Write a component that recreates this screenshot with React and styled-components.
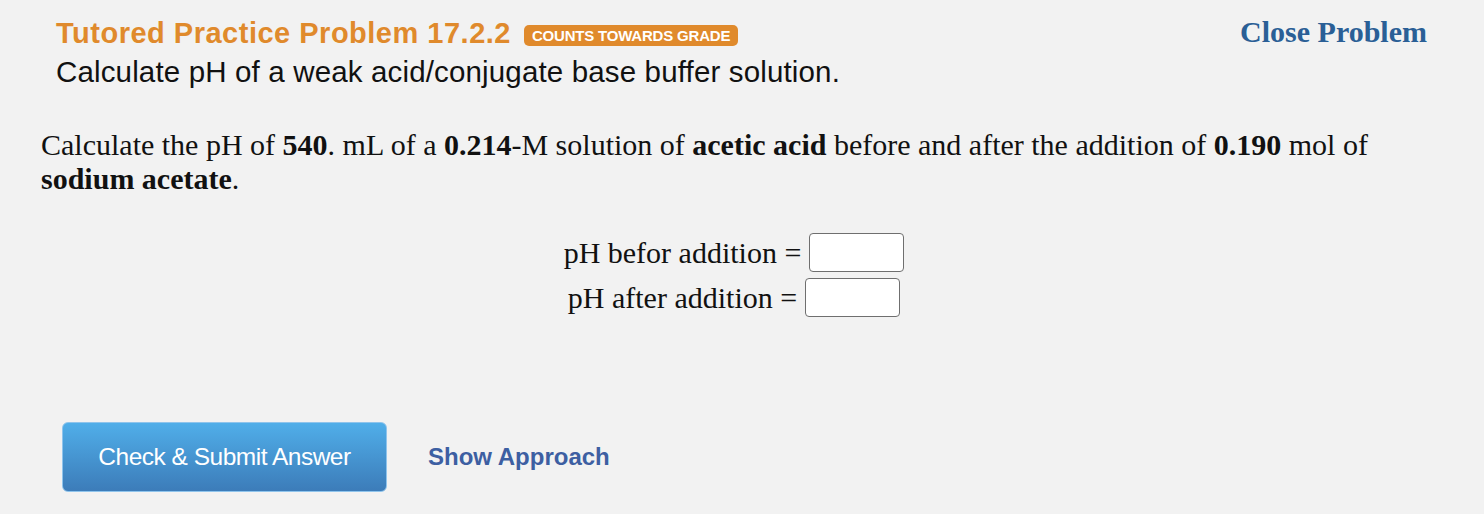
import React from "react";
import styled, { createGlobalStyle } from "styled-components";

const Global = createGlobalStyle`
  html, body { margin: 0; padding: 0; background: #f2f2f2; }
  body { width: 1484px; height: 514px; overflow: hidden; }
`;

const Page = styled.div`
  width: 1484px;
  height: 514px;
  box-sizing: border-box;
  background: #f2f2f2;
  padding: 14px 57px 0 41px;
  display: flex;
  flex-direction: column;
`;

const Header = styled.div`
  display: flex;
  justify-content: space-between;
  align-items: flex-start;
  padding-left: 15px;
`;

const TitleBlock = styled.div`
  display: flex;
  flex-direction: column;
`;

const TitleRow = styled.div`
  display: flex;
  align-items: center;
  gap: 13px;
`;

const Title = styled.h1`
  margin: 0;
  font-family: "Liberation Sans", Arial, sans-serif;
  font-weight: 700;
  font-size: 29px;
  letter-spacing: 0.5px;
  line-height: 38px;
  color: #e08a2c;
`;

const Badge = styled.span`
  background: #e08a2c;
  color: #fff;
  font-family: "Liberation Sans", Arial, sans-serif;
  font-weight: 700;
  font-size: 15px;
  letter-spacing: -0.2px;
  line-height: 21px;
  padding: 0 8px;
  border-radius: 5px;
  margin-top: 5px;
`;

const Subtitle = styled.div`
  font-family: "Liberation Sans", Arial, sans-serif;
  font-size: 29.5px;
  letter-spacing: 0.15px;
  line-height: 36px;
  margin-top: 2px;
  color: #111;
`;

const CloseLink = styled.a`
  font-family: "Liberation Serif", "Times New Roman", serif;
  font-weight: 700;
  font-size: 30px;
  line-height: 36px;
  color: #2a5f96;
  text-decoration: none;
  cursor: pointer;
`;

const Question = styled.p`
  margin: 38px 0 0 0;
  font-family: "Liberation Serif", "Times New Roman", serif;
  font-size: 30px;
  line-height: 34px;
  color: #111;
`;

const Answers = styled.div`
  margin-top: 37px;
  display: flex;
  flex-direction: column;
  align-items: center;
  gap: 6px;
`;

const AnswerRow = styled.label`
  display: flex;
  align-items: center;
  gap: 8px;
  font-family: "Liberation Serif", "Times New Roman", serif;
  font-size: 30px;
  color: #111;
`;

const AnswerInput = styled.input`
  width: 95px;
  height: 39px;
  box-sizing: border-box;
  border: 1.5px solid #6f6f6f;
  border-radius: 4px;
  background: #fff;
`;

const Actions = styled.div`
  margin-top: auto;
  margin-bottom: 22px;
  padding-left: 21px;
  display: flex;
  align-items: center;
  gap: 41px;
`;

const SubmitButton = styled.button`
  width: 325px;
  height: 70px;
  border-radius: 6px;
  border: 1.5px solid #8fc4ec;
  background: linear-gradient(#50aee9, #3c7cb9);
  color: #fff;
  font-family: "Liberation Sans", Arial, sans-serif;
  font-size: 24.5px;
  letter-spacing: -0.5px;
  cursor: pointer;
`;

const ApproachLink = styled.a`
  font-family: "Liberation Sans", Arial, sans-serif;
  font-weight: 700;
  font-size: 24px;
  color: #3d5fa2;
  cursor: pointer;
`;

export default function App() {
  return (
    <>
      <Global />
      <Page>
        <Header>
          <TitleBlock>
            <TitleRow>
              <Title>Tutored Practice Problem 17.2.2</Title>
              <Badge>COUNTS TOWARDS GRADE</Badge>
            </TitleRow>
            <Subtitle>Calculate pH of a weak acid/conjugate base buffer solution.</Subtitle>
          </TitleBlock>
          <CloseLink>Close Problem</CloseLink>
        </Header>
        <Question>
          Calculate the pH of <b>540</b>. mL of a <b>0.214</b>-M solution of <b>acetic acid</b> before and after the addition of <b>0.190</b> mol of <b>sodium acetate</b>.
        </Question>
        <Answers>
          <AnswerRow>
            pH befor addition = <AnswerInput />
          </AnswerRow>
          <AnswerRow>
            pH after addition = <AnswerInput />
          </AnswerRow>
        </Answers>
        <Actions>
          <SubmitButton>Check &amp; Submit Answer</SubmitButton>
          <ApproachLink>Show Approach</ApproachLink>
        </Actions>
      </Page>
    </>
  );
}
